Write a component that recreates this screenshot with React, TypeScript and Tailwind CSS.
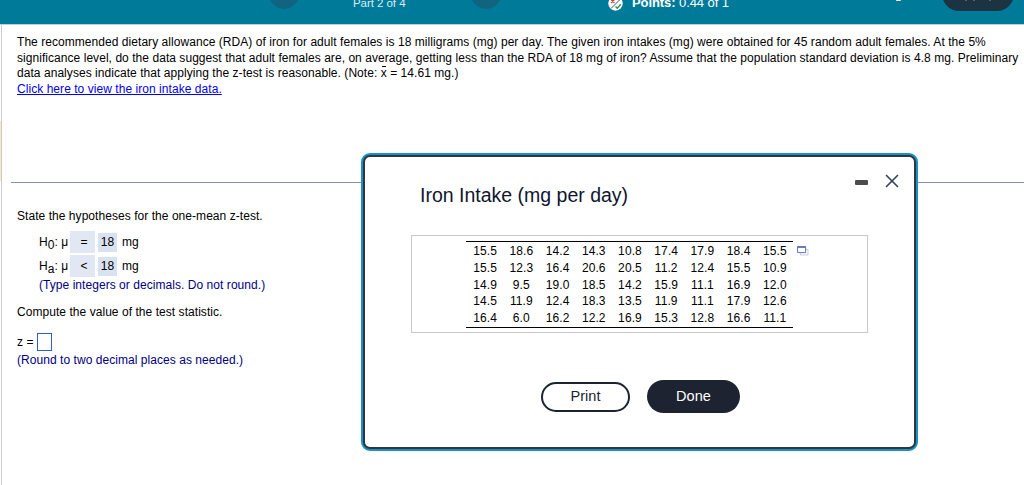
import { X } from 'lucide-react'

const IRON_INTAKE = [
  ['15.5', '18.6', '14.2', '14.3', '10.8', '17.4', '17.9', '18.4', '15.5'],
  ['15.5', '12.3', '16.4', '20.6', '20.5', '11.2', '12.4', '15.5', '10.9'],
  ['14.9', '9.5', '19.0', '18.5', '14.2', '15.9', '11.1', '16.9', '12.0'],
  ['14.5', '11.9', '12.4', '18.3', '13.5', '11.9', '11.1', '17.9', '12.6'],
  ['16.4', '6.0', '16.2', '12.2', '16.9', '15.3', '12.8', '16.6', '11.1'],
]

function ScoreIcon() {
  return (
    <svg width="15" height="15" viewBox="0 0 15 15" className="mb-[13px] ml-[107px] shrink-0">
      <circle cx="7.5" cy="7.5" r="7.2" fill="#fff" />
      <path d="M3 12.5 12.5 3" stroke="#3b5560" strokeWidth="1" />
      <path d="m3 3.5 3.5 3.5M6.5 3.5 3 7" stroke="#d33a3a" strokeWidth="1.2" />
      <path d="m7.5 10.5 1.8 1.8 3.5-4" fill="none" stroke="#27924a" strokeWidth="1.3" />
    </svg>
  )
}

function Header() {
  return (
    <header className="flex h-[25px] items-end overflow-hidden border-b border-[#c5cdd8] bg-[#007a99] text-white">
      <div className="mb-[15px] ml-[269px] size-[30px] shrink-0 rounded-full bg-[#10647f]" />
      <span className="mb-[14px] ml-[54px] w-[53px] shrink-0 whitespace-nowrap text-[11.5px] leading-[14px] tracking-[-0.05px] text-[#d7edf3]">
        Part 2 of 4
      </span>
      <div className="mb-[15px] ml-[65px] size-[30px] shrink-0 rounded-full bg-[#10647f]" />
      <ScoreIcon />
      <span className="mb-[14px] ml-[9px] w-[100px] shrink-0 whitespace-nowrap text-[13px] leading-[14px] tracking-[-0.08px]">
        <b>Points:</b> 0.44 of 1
      </span>
      <div className="mb-[23px] ml-[164px] h-[4px] w-[5px] shrink-0 rounded-[1px] bg-white" />
      <div className="mb-[13px] ml-[41px] flex h-[34px] w-[72px] shrink-0 items-end justify-center gap-[6px] rounded-full bg-[#1c3442] pb-[10px]">
        <span className="h-[2px] w-[2px] bg-[#52636d]" />
        <span className="h-[2px] w-[2px] bg-[#52636d]" />
        <span className="ml-[8px] h-[2px] w-[2px] bg-[#52636d]" />
      </div>
    </header>
  )
}

function Hypothesis({ sub, sign }: { sub: string; sign: string }) {
  return (
    <div className="flex h-[24px] items-center">
      <span className="w-[31px] whitespace-nowrap">
        H<span className="relative top-[3px]">{sub}</span>: μ
      </span>
      <span className="flex h-[22px] w-[25px] items-center justify-center bg-[#e2e8f3] pl-[3px]">{sign}</span>
      <span className="ml-[3px] flex h-[19px] w-[19px] items-center justify-center bg-[#d9e2f1]">18</span>
      <span className="ml-[5px]">mg</span>
    </div>
  )
}

// Small "copy to spreadsheet" glyph beside the table
function PopoutIcon() {
  return (
    <svg width="12" height="10" viewBox="0 0 12 10" className="mt-[5px] ml-[4px] shrink-0">
      <path d="M3.5 3.5h7.5v5.5H3.5z" fill="#fff" stroke="#c5cbe8" />
      <path d="M.6.6h8v6h-8z" fill="#fff" stroke="#6673b8" />
      <path d="M.2 1.2h8.8" stroke="#6673b8" strokeWidth="1.5" />
    </svg>
  )
}

function IntakeDialog() {
  return (
    <div className="absolute top-[153px] left-[361px] h-[298px] w-[557px] rounded-[9px] border-2 border-[#1691cf] bg-[#333638] p-[2px]">
      <div className="h-full rounded-[5px] bg-white pt-[25px]">
        <div className="flex h-[30px]">
          <h2 className="mt-[1px] ml-[55px] w-[435px] text-[19.5px] leading-[24px] tracking-normal text-[#10152f]">
            Iron Intake (mg per day)
          </h2>
          <div className="mt-[-2px] h-[5px] w-[13px] rounded-[1px] bg-[#4c4c4c]" />
          <X className="mt-[-12px] ml-[13px]" size={22} strokeWidth={1.8} color="#35445a" />
        </div>
        <div className="mt-[23px] ml-[46px] flex h-[98px] w-[457px] border border-[#c9c9c9] pt-[5px] pl-[54px]">
          <div className="flex h-[87px] w-[327px] flex-col border-y border-black">
            {IRON_INTAKE.map((row, i) => (
              <div key={i} className="grid h-[16.75px] grid-cols-9 pl-px text-center leading-[18px] tracking-[0.1px]">
                {row.map((value, j) => (
                  <span key={j}>{value}</span>
                ))}
              </div>
            ))}
          </div>
          <PopoutIcon />
        </div>
        <div className="mt-[47px] ml-[176px] flex items-center gap-[17px] text-[14.5px]">
          <button className="h-[30px] w-[89px] rounded-full border-2 border-[#1d2330] leading-none text-[#1d2330]">
            Print
          </button>
          <button className="h-[33px] w-[93px] rounded-full bg-[#1d2330] leading-none text-white">Done</button>
        </div>
      </div>
    </div>
  )
}

export default function App() {
  return (
    <div className="relative flex h-[485px] w-[1024px] flex-col overflow-hidden bg-white font-['Liberation_Sans',Arial,sans-serif] text-[12px] tracking-[0.05px] text-black">
      <Header />
      <div className="flex flex-1">
        <div className="w-[2px] border-r border-[#c9cbd9] pt-[96px]">
          <div className="h-[60px] w-px bg-[#fde9b5]" />
        </div>
        <main className="flex-1 pt-[10px]">
          <div className="ml-[15px] h-[147px] leading-[15.6px] whitespace-nowrap">
            <p>
              The recommended dietary allowance (RDA) of iron for adult females is 18 milligrams (mg) per day. The given iron intakes (mg) were obtained for 45 random adult females. At the 5%
            </p>
            <p>
              significance level, do the data suggest that adult females are, on average, getting less than the RDA of 18 mg of iron? Assume that the population standard deviation is 4.8 mg. Preliminary
            </p>
            <p>
              data analyses indicate that applying the z-test is reasonable. (Note:{' '}
              <span className="relative">
                x<span className="absolute top-0 left-px h-px w-[4px] bg-black" />
              </span>{' '}
              = 14.61 mg.)
            </p>
            <a href="#" className="text-[#0000ee] underline">
              Click here to view the iron intake data.
            </a>
          </div>
          <hr className="ml-[9px] border-[#8493ab]" />
          <section className="ml-[15px] pt-[25px] leading-[16px] whitespace-nowrap">
            <p>State the hypotheses for the one-mean z-test.</p>
            <div className="mt-[6px] ml-[22px]">
              <Hypothesis sub="0" sign="=" />
              <Hypothesis sub="a" sign="<" />
              <p className="mt-[-1px] text-[#000080]">(Type integers or decimals. Do not round.)</p>
            </div>
            <p className="mt-[11px]">Compute the value of the test statistic.</p>
            <div className="mt-[12px] flex h-[19px] items-center">
              z =<span className="ml-[3px] h-[18px] w-[15px] border border-[#2b5fc9]" />
            </div>
            <p className="mt-px text-[#000080]">(Round to two decimal places as needed.)</p>
          </section>
        </main>
      </div>
      <IntakeDialog />
    </div>
  )
}
